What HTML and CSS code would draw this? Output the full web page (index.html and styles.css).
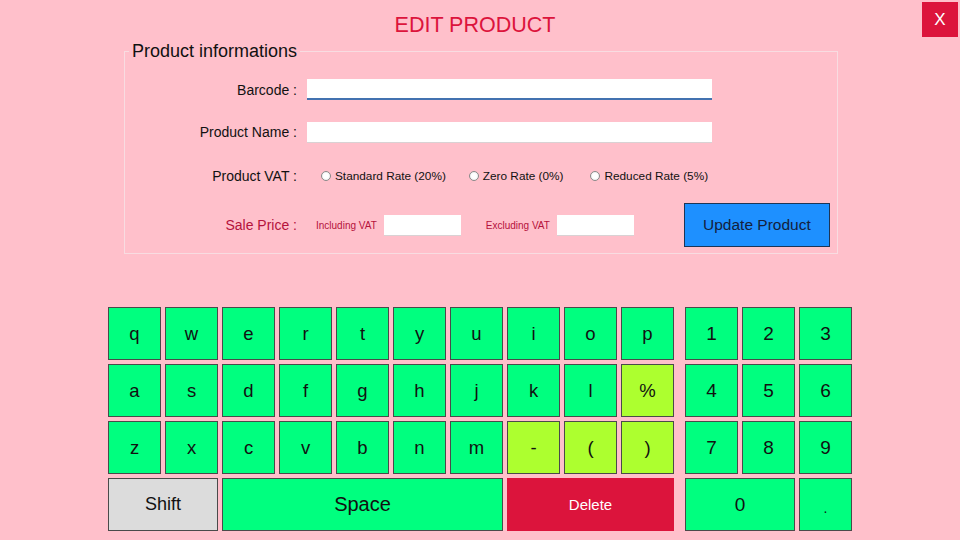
FILE: index.html
```html
<!DOCTYPE html>
<html lang="en">
  <head>
    <meta charset="UTF-8" />
    <meta name="viewport" content="width=device-width, initial-scale=1.0" />
    <title>Edit Product</title>
    <link rel="stylesheet" href="styles.css">
  </head>
  <body>
    <div class="window">
      <header class="top">
        <h1 class="title">EDIT PRODUCT</h1>
        <button class="close">X</button>
      </header>

      <fieldset class="info">
        <legend>Product informations</legend>

        <div class="row row-barcode">
          <label class="field-label" for="barcode">Barcode :</label>
          <input type="text" class="text-input focused" id="barcode" />
        </div>

        <div class="row row-name">
          <label class="field-label" for="name">Product Name :</label>
          <input type="text" class="text-input" id="name" />
        </div>

        <div class="row row-vat">
          <span class="field-label">Product VAT :</span>
          <div class="radios">
            <span class="radio"><span class="dot"></span>Standard Rate (20%)</span>
            <span class="radio"><span class="dot"></span>Zero Rate (0%)</span>
            <span class="radio"><span class="dot"></span>Reduced Rate (5%)</span>
          </div>
        </div>

        <div class="row row-price">
          <span class="field-label red">Sale Price :</span>
          <span class="small-label inc">Including VAT</span>
          <input type="text" class="price-input" />
          <span class="small-label exc">Excluding VAT</span>
          <input type="text" class="price-input" />
          <button class="update">Update Product</button>
        </div>
      </fieldset>

      <div class="keyboard">
        <div class="keys letters">
          <button class="key">q</button>
          <button class="key">w</button>
          <button class="key">e</button>
          <button class="key">r</button>
          <button class="key">t</button>
          <button class="key">y</button>
          <button class="key">u</button>
          <button class="key">i</button>
          <button class="key">o</button>
          <button class="key">p</button>

          <button class="key">a</button>
          <button class="key">s</button>
          <button class="key">d</button>
          <button class="key">f</button>
          <button class="key">g</button>
          <button class="key">h</button>
          <button class="key">j</button>
          <button class="key">k</button>
          <button class="key">l</button>
          <button class="key lime">%</button>

          <button class="key">z</button>
          <button class="key">x</button>
          <button class="key">c</button>
          <button class="key">v</button>
          <button class="key">b</button>
          <button class="key">n</button>
          <button class="key">m</button>
          <button class="key lime">-</button>
          <button class="key lime">(</button>
          <button class="key lime">)</button>

          <button class="key shift">Shift</button>
          <button class="key space">Space</button>
          <button class="key delete">Delete</button>
        </div>

        <div class="keys numbers">
          <button class="key">1</button>
          <button class="key">2</button>
          <button class="key">3</button>
          <button class="key">4</button>
          <button class="key">5</button>
          <button class="key">6</button>
          <button class="key">7</button>
          <button class="key">8</button>
          <button class="key">9</button>
          <button class="key zero">0</button>
          <button class="key dot-key">.</button>
        </div>
      </div>
    </div>
  </body>
</html>
```

FILE: styles.css
```css
* {
  box-sizing: border-box;
  font-family: "Liberation Sans", Arial, sans-serif;
}

body {
  margin: 0;
  background: #ffc0cb;
}

.window {
  width: 960px;
  height: 540px;
  overflow: hidden;
}

.top {
  position: relative;
  height: 41px;
  padding-right: 10px;
  text-align: center;
}

.title {
  margin: 0;
  padding-top: 13px;
  font-size: 21.5px;
  line-height: 24px;
  font-weight: normal;
  color: #dc143c;
}

.close {
  position: absolute;
  top: 2px;
  right: 2px;
  width: 36px;
  height: 35px;
  border: none;
  background: #dc143c;
  color: #ffffff;
  font-size: 17px;
  padding: 0;
}

.info {
  margin: 0 0 0 124px;
  width: 714px;
  min-width: 0;
  padding: 7px 0 2px 0;
  border: 1px solid #f8dce1;
}

.info legend {
  margin-left: 4px;
  padding: 0 3px;
  font-size: 18px;
  line-height: 20px;
  color: #111111;
}

.row {
  display: flex;
  align-items: center;
}

.row-barcode {
  height: 43px;
}

.row-name {
  height: 42px;
}

.row-vat {
  height: 46px;
}

.row-price {
  height: 52px;
}

.field-label {
  width: 172px;
  margin-right: 10px;
  text-align: right;
  font-size: 14px;
  color: #111111;
}

.field-label.red {
  color: #b5123c;
}

.text-input {
  width: 405px;
  height: 21px;
  border: none;
  border-bottom: 1px solid #d9d2d4;
  background: #ffffff;
  outline: none;
}

.text-input.focused {
  border-bottom: 2px solid #4372b0;
}

.radios {
  display: flex;
  align-items: center;
  margin-left: 14px;
}

.radio {
  display: flex;
  align-items: center;
  gap: 4px;
  margin-right: 23px;
  font-size: 11.8px;
  color: #111111;
}

.radio:nth-child(2) {
  margin-right: 27px;
}

.dot {
  width: 10px;
  height: 10px;
  border: 1px solid #8a8a8a;
  border-radius: 50%;
  background: radial-gradient(circle, #ffffff 40%, #e4e4e4 100%);
}

.small-label {
  font-size: 10px;
  color: #b5123c;
}

.small-label.inc {
  margin-left: 9px;
  margin-right: 7px;
}

.small-label.exc {
  margin-left: 25px;
  margin-right: 7px;
}

.price-input {
  width: 77px;
  height: 21px;
  border: none;
  border-bottom: 1px solid #d9d2d4;
  background: #ffffff;
}

.update {
  margin-left: 50px;
  width: 146px;
  height: 44px;
  border: 1px solid #1d3557;
  background: #1e90ff;
  color: #14213d;
  font-size: 15.5px;
  padding: 0;
}

.keyboard {
  display: flex;
  gap: 11px;
  margin: 53px 0 0 108px;
}

.keys {
  display: grid;
  grid-auto-rows: 53px;
  gap: 4px;
}

.letters {
  grid-template-columns: repeat(10, 53px);
}

.numbers {
  grid-template-columns: repeat(3, 53px);
}

.key {
  border: 1px solid #4a4a4a;
  background: #00ff7f;
  color: #111111;
  font-size: 18.5px;
  padding: 0;
}

.key.lime {
  background: #adff2f;
}

.key.shift {
  grid-column: span 2;
  background: #dcdcdc;
  font-size: 18px;
}

.key.space {
  grid-column: span 5;
  font-size: 20px;
}

.key.delete {
  grid-column: span 3;
  background: #dc143c;
  border-color: #dc143c;
  color: #ffffff;
  font-size: 15px;
}

.key.zero {
  grid-column: span 2;
  font-size: 19px;
}

.numbers .key {
  font-size: 19px;
}

.key.dot-key {
  font-size: 14px;
  padding-top: 6px;
}
```
